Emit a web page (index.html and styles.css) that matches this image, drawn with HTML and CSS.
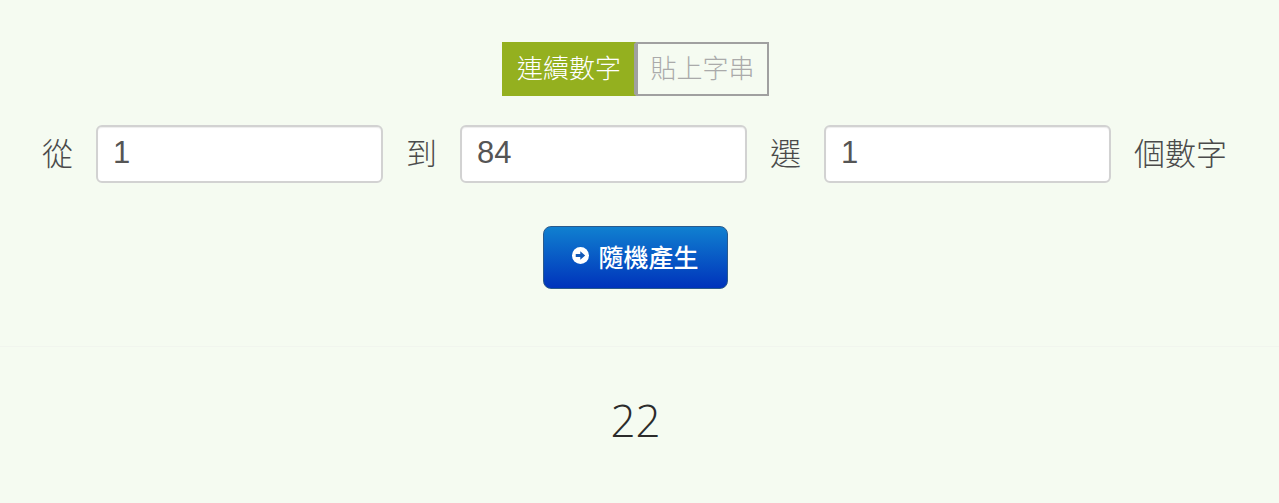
FILE: index.html
```html
<!DOCTYPE html>
<html lang="zh-Hant">
<head>
  <meta charset="UTF-8" />
  <meta name="viewport" content="width=device-width, initial-scale=1.0" />
  <title>隨機產生</title>
  <link rel="stylesheet" href="styles.css">
</head>
<body>
  <section class="generator">
    <div class="tabs">
      <div class="tab tab-active">連續數字</div>
      <div class="tab">貼上字串</div>
    </div>

    <div class="range-row">
      <span class="range-label">從</span>
      <input class="range-input" type="text" value="1">
      <span class="range-label">到</span>
      <input class="range-input" type="text" value="84">
      <span class="range-label">選</span>
      <input class="range-input" type="text" value="1">
      <span class="range-label">個數字</span>
    </div>

    <div class="action">
      <button class="submit-button" type="button">
        <svg class="arrow-icon" viewBox="0 0 16 16" width="17" height="17" aria-hidden="true">
          <circle cx="8" cy="8" r="8" fill="#fff"/>
          <path d="M3.5 6.6h4.3V3.9L12.4 8l-4.6 4.1V9.4H3.5z" fill="#1259b8"/>
        </svg>
        隨機產生
      </button>
    </div>
  </section>

  <section class="result">22</section>
</body>
</html>
```

FILE: styles.css
```css
/* General page styling */
html, body {
  margin: 0;
  padding: 0;
}

body {
  box-sizing: border-box;
  height: 503px;
  padding-right: 8px;
  overflow: hidden;
  background-color: #f5fbf1;
  color: #333;
  font-family: "Open Sans", "Noto Sans CJK TC", sans-serif;
}

/* Top form area */
.generator {
  box-sizing: border-box;
  height: 347px;
  margin-right: -8px;
  padding: 42px 8px 0 0;
  border-bottom: 1px solid #f1f5ee;
}

/* Tabs */
.tabs {
  display: flex;
  justify-content: center;
}

.tab {
  box-sizing: border-box;
  width: 133px;
  height: 54px;
  border: 2px solid #a0a0a0;
  color: #aaa;
  font-size: 26px;
  font-weight: 300;
  line-height: 48px;
  text-align: center;
}

.tab-active {
  width: 134px;
  border-color: #94b01f;
  border-right-color: #a0a0a0;
  background-color: #94b01f;
  color: #fff;
}

/* Range inputs */
.range-row {
  display: flex;
  justify-content: center;
  align-items: center;
  gap: 23px;
  margin-top: 29px;
  padding-right: 2px;
}

.range-label {
  margin-bottom: 3px;
  font-size: 31px;
  font-weight: 300;
  line-height: 52px;
  color: #4a4a4a;
}

.range-input {
  box-sizing: border-box;
  width: 287px;
  height: 58px;
  padding: 0 15px 2px;
  background-color: #fff;
  border: 2px solid #d2d2d2;
  border-radius: 6px;
  box-shadow: inset 0 1px 1px rgba(0, 0, 0, 0.075);
  color: #555;
  font-family: "Liberation Sans", sans-serif;
  font-size: 31px;
}

/* Submit button */
.action {
  display: flex;
  justify-content: center;
  margin-top: 43px;
}

.submit-button {
  display: flex;
  align-items: center;
  justify-content: center;
  gap: 9px;
  box-sizing: border-box;
  width: 185px;
  height: 63px;
  padding: 0 0 3px;
  border: 1px solid #2a5a8c;
  border-radius: 8px;
  background: linear-gradient(to bottom, #1080d0, #0033bb);
  color: #fff;
  font-family: "Noto Sans CJK TC", sans-serif;
  font-size: 25px;
  font-weight: 500;
}

.arrow-icon {
  flex: none;
  margin-bottom: 2px;
}

/* Result number */
.result {
  margin-top: 43px;
  font-size: 44px;
  font-weight: 300;
  line-height: 60px;
  text-align: center;
  color: #2b2b2b;
}
```
